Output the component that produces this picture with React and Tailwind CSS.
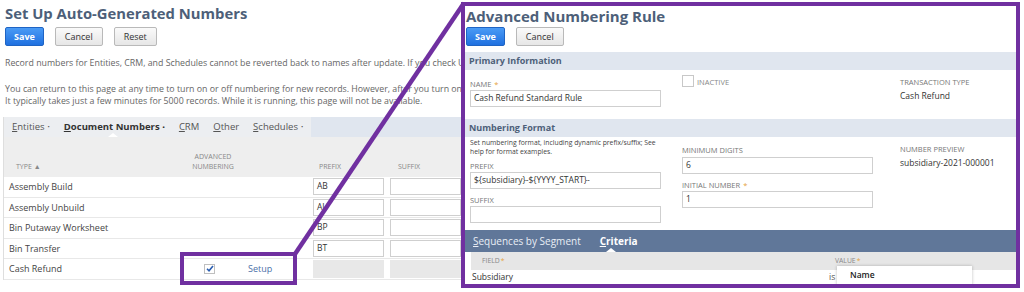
import React from 'react';

const rows = [
  { type: 'Assembly Build', prefix: 'AB' },
  { type: 'Assembly Unbuild', prefix: 'AU' },
  { type: 'Bin Putaway Worksheet', prefix: 'BP' },
  { type: 'Bin Transfer', prefix: 'BT' },
  { type: 'Cash Refund', prefix: '', advanced: true },
];

const BlueButton = ({ children }) => (
  <div className="flex h-[19px] items-center justify-center rounded-[2px] border border-[#1f64c4] bg-gradient-to-b from-[#4a9bf5] to-[#1f70e0] px-[8px] text-[9px] font-bold text-white">
    {children}
  </div>
);

const GrayButton = ({ children }) => (
  <div className="flex h-[19px] items-center justify-center rounded-[2px] border border-[#b9b9b9] bg-gradient-to-b from-[#fafafa] to-[#e6e6e6] px-[9px] text-[9px] text-[#333]">
    {children}
  </div>
);

const Input = ({ value, className = '' }) => (
  <div className={`flex h-[17px] items-center border border-[#cfcfcf] bg-white px-[3px] text-[8.5px] text-[#333] ${className}`}>
    {value}
  </div>
);

const Label = ({ children, required }) => (
  <div className="text-[7.5px] uppercase leading-[10px] text-[#777]">
    {children}
    {required && <span className="ml-[3px] text-[#e5a23a]">*</span>}
  </div>
);

const Tab = ({ letter, rest, bold, dot }) => (
  <div className={`flex shrink-0 items-center gap-[3px] whitespace-nowrap ${bold ? 'font-bold text-[#333]' : 'text-[#555]'}`}>
    <span>
      <span className="underline">{letter}</span>
      {rest}
    </span>
    {dot && <span className="text-[6px]">•</span>}
  </div>
);

function SetupPage() {
  return (
    <div className="w-[461px] shrink-0 overflow-hidden">
      <div className="w-[720px]">
        <h1 className="pl-[5px] pt-[3px] text-[14.8px] font-bold leading-[21px] text-[#4d5f79]">
          Set Up Auto-Generated Numbers
        </h1>
        <div className="mt-[3px] flex gap-[11px] pl-[5px]">
          <BlueButton>Save</BlueButton>
          <GrayButton>Cancel</GrayButton>
          <GrayButton>Reset</GrayButton>
        </div>
        <div className="whitespace-nowrap pl-[5px] text-[8.8px] leading-[12px] text-[#666]">
          <p className="mt-[11px]">
            Record numbers for Entities, CRM, and Schedules cannot be reverted back to names after update. If you check Update, existing records will be renumbered.
          </p>
          <p className="mt-[14px]">
            You can return to this page at any time to turn on or off numbering for new records. However, after you turn on numbering for existing records, this cannot be undone.
          </p>
          <p>It typically takes just a few minutes for 5000 records. While it is running, this page will not be available.</p>
        </div>

        <div className="ml-[3px] mt-[10px] border-l border-[#dedede]">
          <div className="flex h-[20px] bg-[#e0e6ef]">
            <div className="relative flex w-[307px] items-center gap-[14px] bg-[#eceef1] pl-[8px] text-[9.5px]">
              <Tab letter="E" rest="ntities" dot />
              <Tab letter="D" rest="ocument Numbers" bold dot />
              <Tab letter="C" rest="RM" />
              <Tab letter="O" rest="ther" />
              <Tab letter="S" rest="chedules" dot />
              <div className="absolute bottom-0 left-[104px] h-0 w-0 border-x-[5px] border-b-[4px] border-x-transparent border-b-white" />
            </div>
          </div>

          <div className="flex h-[40px] items-end bg-[#eeeeee] pb-[5px] text-[7px] uppercase text-[#888]">
            <div className="w-[177px] pl-[12px]">Type ▲</div>
            <div className="w-[128px]">
              <div className="ml-[9px] w-[46px] text-center leading-[10px]">Advanced Numbering</div>
            </div>
            <div className="w-[78px] pl-[10px]">Prefix</div>
            <div className="w-[78px] pl-[11px]">Suffix</div>
          </div>

          {rows.map((row) => (
            <div key={row.type} className="flex h-[20.5px] items-center border-b border-[#e8e8e8] bg-white text-[9px] text-[#444]">
              <div className="w-[177px] pl-[5px]">{row.type}</div>
              <div className="flex w-[128px] items-center">
                {row.advanced && (
                  <>
                    <div className="ml-[23px] flex h-[10px] w-[11px] items-center justify-center border border-[#bfbfbf] bg-white">
                      <svg width="8" height="7" viewBox="0 0 8 7">
                        <path d="M1 3.8 L3 5.8 L7 1" fill="none" stroke="#2a5db0" strokeWidth="1.6" />
                      </svg>
                    </div>
                    <span className="ml-[33px] text-[#4a6fa8]">Setup</span>
                  </>
                )}
              </div>
              <div className="w-[78px] pl-[4px]">
                {row.advanced ? (
                  <div className="h-[18px] w-[71px] bg-[#e8e8e8]" />
                ) : (
                  <Input value={row.prefix} className="w-[71px]" />
                )}
              </div>
              <div className="w-[78px] pl-[3px]">
                {row.advanced ? (
                  <div className="h-[18px] w-[71px] bg-[#e8e8e8]" />
                ) : (
                  <Input value="" className="w-[71px]" />
                )}
              </div>
            </div>
          ))}
        </div>
      </div>
    </div>
  );
}

function RulePanel() {
  return (
    <div className="mt-[2px] h-[286px] w-[559px] shrink-0 overflow-hidden border-[4px] border-[#7030a0] bg-white">
      <h2 className="pl-[1px] text-[15px] font-bold leading-[20px] text-[#4d5f79]">Advanced Numbering Rule</h2>
      <div className="mt-[1px] flex gap-[11px] pl-[1px]">
        <BlueButton>Save</BlueButton>
        <GrayButton>Cancel</GrayButton>
      </div>

      <div className="mt-[6px] flex h-[18px] items-center bg-[#e0e6ef] pl-[4px] text-[9px] font-bold text-[#4d5f79]">
        Primary Information
      </div>
      <div className="grid grid-cols-[212px_218px_1fr] pl-[5px] pt-[5px]">
        <div className="pt-[4px]">
          <Label required>Name</Label>
          <Input value="Cash Refund Standard Rule" className="mt-[1px] w-[191px]" />
        </div>
        <div className="flex items-start">
          <div className="h-[12px] w-[12px] border border-[#c8c8c8] bg-white" />
          <span className="ml-[3px] mt-[2px] text-[7.5px] uppercase text-[#888]">Inactive</span>
        </div>
        <div className="pt-[2px]">
          <Label>Transaction Type</Label>
          <div className="mt-[3px] text-[8.5px] text-[#333]">Cash Refund</div>
        </div>
      </div>

      <div className="mt-[12px] flex h-[18px] items-center bg-[#e0e6ef] pl-[4px] text-[9px] font-bold text-[#4d5f79]">
        Numbering Format
      </div>
      <div className="grid grid-cols-[212px_218px_1fr] pl-[5px]">
        <div>
          <div className="pt-[1px] text-[6.8px] leading-[9px] text-[#444]">
            Set numbering format, including dynamic prefix/suffix; See
            <br />
            help for format examples.
          </div>
          <div className="mt-[5px]">
            <Label>Prefix</Label>
          </div>
          <Input value="${subsidiary}-${YYYY_START}-" className="mt-[1px] w-[191px]" />
          <div className="mt-[6px]">
            <Label>Suffix</Label>
          </div>
          <Input value="" className="mt-[1px] w-[191px]" />
        </div>
        <div className="pt-[8px]">
          <Label>Minimum Digits</Label>
          <Input value="6" className="mt-[2px] w-[191px]" />
          <div className="mt-[6px]">
            <Label required>Initial Number</Label>
          </div>
          <Input value="1" className="mt-[1px] w-[191px]" />
        </div>
        <div className="pt-[7px]">
          <Label>Number Preview</Label>
          <div className="mt-[3px] text-[8.5px] text-[#333]">subsidiary-2021-000001</div>
        </div>
      </div>

      <div className="relative mt-[7px] flex h-[22px] items-center gap-[19px] bg-[#607799] pl-[8px] text-[10px] text-[#e9eef5]">
        <span className="whitespace-nowrap">
          <span className="underline">S</span>equences by Segment
        </span>
        <span className="font-bold text-white">
          <span className="underline">C</span>riteria
        </span>
        <div className="absolute bottom-0 left-[141px] h-0 w-0 border-x-[5px] border-b-[4px] border-x-transparent border-b-white" />
      </div>
      <div className="pl-[6px]">
        <div className="flex h-[18px] items-center bg-[#e6e6e6] text-[6.8px] uppercase text-[#888]">
          <div className="w-[364px] pl-[11px]">
            Field<span className="ml-[1px] text-[#e5a23a]">*</span>
          </div>
          <div>
            Value<span className="ml-[1px] text-[#e5a23a]">*</span>
          </div>
        </div>
        <div className="relative flex h-[14px] items-center text-[8.5px] text-[#333]">
          <div className="w-[358px] pl-[1px]">Subsidiary</div>
          <div className="text-[#555]">is :</div>
          <div className="absolute left-[366px] top-[-4px] flex h-[20px] w-[135px] items-start bg-white pl-[13px] pt-[3px] text-[8.5px] font-semibold text-[#222] shadow-[0_0_3px_rgba(0,0,0,0.25)]">
            Name
          </div>
        </div>
      </div>
    </div>
  );
}

export default function App() {
  return (
    <div className="relative h-[292px] w-[1024px] overflow-hidden bg-white font-['Open_Sans',sans-serif]">
      <div className="flex">
        <SetupPage />
        <RulePanel />
      </div>
      {/* callout highlight */}
      <div className="pointer-events-none absolute left-[180px] top-[252px] h-[33px] w-[117px] border-[4px] border-[#7030a0]" />
      <svg className="pointer-events-none absolute left-0 top-0" width="1024" height="292">
        <line x1="295" y1="254" x2="464" y2="3" stroke="#7030a0" strokeWidth="4.5" />
      </svg>
    </div>
  );
}
